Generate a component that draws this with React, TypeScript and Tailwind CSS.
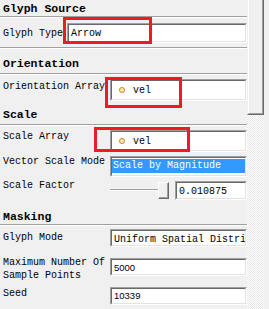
import React from "react";

function Field({
  className,
  innerClass,
  children,
}: {
  className: string;
  innerClass: string;
  children?: React.ReactNode;
}) {
  return (
    <div
      className={
        "min-w-0 border-t border-l border-b border-r border-t-[#a0a0a0] border-l-[#a0a0a0] border-b-white border-r-white " +
        className
      }
    >
      <div
        className={
          "h-full overflow-hidden whitespace-nowrap bg-white border-t border-l border-b border-r border-t-[#696969] border-l-[#696969] border-b-[#e3e3e3] border-r-[#e3e3e3] " +
          innerClass
        }
      >
        {children}
      </div>
    </div>
  );
}

function Sep() {
  return <div className="h-[2px] shrink-0 border-t border-b border-t-[#a0a0a0] border-b-white" />;
}

function ArrayDot() {
  return (
    <span className="mt-[2px] block h-[6px] w-[6px] shrink-0 rounded-full border border-[#d4822a] bg-[#ffe8b6]" />
  );
}

export default function App() {
  return (
    <div className="relative flex h-[309px] w-[269px] overflow-hidden bg-[#f0f0f0] font-['Liberation_Mono',monospace] text-[10px] text-black">
      {/* content */}
      <div className="flex w-[247px] min-w-0 shrink-0 flex-col">
        {/* Glyph Source */}
        <div className="h-[16px] shrink-0 pl-[3px] pt-[2px] text-[11.5px] font-bold leading-[14px]">Glyph Source</div>
        <Sep />
        <div className="mt-[5px] flex h-[20px] shrink-0">
          <div className="w-[67px] shrink-0 pl-[3px] pt-[5px] leading-[12px]">Glyph Type</div>
          <Field className="h-[20px] flex-1" innerClass="pl-[2px] pt-[3px] leading-[12px]">
            Arrow
          </Field>
        </div>
        <div className="mt-[4px]">
          <Sep />
        </div>

        {/* Orientation */}
        <div className="h-[24px] shrink-0 pl-[3px] pt-[8px] text-[11.5px] font-bold leading-[14px]">Orientation</div>
        <Sep />
        <div className="mt-[4px] flex h-[22px] shrink-0">
          <div className="w-[110px] shrink-0 pl-[3px] pt-[2px] leading-[12px]">Orientation Array</div>
          <Field className="h-[22px] flex-1" innerClass="flex items-start pl-[7px] pt-[4px] leading-[12px]">
            <ArrayDot />
            <span className="ml-[8px]">vel</span>
          </Field>
        </div>

        {/* Scale */}
        <div className="h-[23px] shrink-0 pl-[3px] pt-[7px] text-[11.5px] font-bold leading-[14px]">Scale</div>
        <Sep />
        <div className="mt-[4px] flex h-[22px] shrink-0">
          <div className="w-[110px] shrink-0 pl-[3px] pt-[1px] leading-[12px]">Scale Array</div>
          <Field className="h-[22px] flex-1" innerClass="flex items-start pl-[7px] pt-[4px] leading-[12px]">
            <ArrayDot />
            <span className="ml-[8px]">vel</span>
          </Field>
        </div>
        <div className="mt-[4px] flex h-[21px] shrink-0">
          <div className="w-[110px] shrink-0 pl-[3px] leading-[12px]">Vector Scale Mode</div>
          <Field className="h-[21px] flex-1" innerClass="">
            <div className="mt-[1px] h-[14px] bg-[#3399ff] pl-[1px] leading-[14px] text-white">Scale by Magnitude</div>
          </Field>
        </div>
        <div className="mt-[4px] flex h-[19px] shrink-0">
          <div className="w-[110px] shrink-0 pl-[3px] leading-[10px]">Scale Factor</div>
          <div className="w-[48px] shrink-0 pt-[8px]">
            <div className="h-[2px] border-t border-b border-t-[#a0a0a0] border-b-white" />
          </div>
          <div className="mt-[1px] h-[17px] w-[11px] shrink-0 border border-t-white border-l-white border-r-[#696969] border-b-[#696969]">
            <div className="h-full border-r border-b border-r-[#a0a0a0] border-b-[#a0a0a0] bg-[#f0f0f0]" />
          </div>
          <Field className="ml-[6px] h-[19px] flex-1" innerClass="pl-[2px] pt-[3px] leading-[12px]">
            0.010875
          </Field>
        </div>

        {/* Masking */}
        <div className="h-[24px] shrink-0 pl-[3px] pt-[10px] text-[11.5px] font-bold leading-[14px]">Masking</div>
        <Sep />
        <div className="flex h-[29px] shrink-0">
          <div className="w-[110px] shrink-0 pl-[3px] pt-[6px] leading-[12px]">Glyph Mode</div>
          <Field className="mt-[3px] h-[18px] flex-1" innerClass="pl-[2px] pt-[3px] leading-[12px]">
            Uniform Spatial Distribution
          </Field>
        </div>
        <div className="flex h-[29px] shrink-0">
          <div className="w-[110px] shrink-0 pl-[3px] pt-[1px] leading-[13px]">
            Maximum Number Of
            <br />
            Sample Points
          </div>
          <Field
            className="mt-[3px] h-[18px] flex-1"
            innerClass="pl-[2px] pt-[3px] font-['Liberation_Sans',Arial,sans-serif] text-[9.5px] leading-[10px]"
          >
            5000
          </Field>
        </div>
        <div className="flex h-[25px] shrink-0">
          <div className="w-[110px] shrink-0 pl-[3px] pt-[4px] leading-[12px]">Seed</div>
          <Field
            className="mt-[3px] h-[18px] flex-1"
            innerClass="pl-[2px] pt-[2px] font-['Liberation_Sans',Arial,sans-serif] text-[9.5px] leading-[10px]"
          >
            10339
          </Field>
        </div>
      </div>

      {/* scrollbar */}
      <div className="flex w-[17px] shrink-0 flex-col">
        <div className="h-[115px] shrink-0 border-l border-r border-b border-l-[#f0f0f0] border-r-[#696969] border-b-[#696969]">
          <div className="h-full border-l border-r border-b border-l-white border-r-[#a0a0a0] border-b-[#a0a0a0] bg-[#f0f0f0]" />
        </div>
        <div className="flex-1 bg-[repeating-conic-gradient(#ffffff_0_25%,#e6e6e6_0_50%)] bg-[length:2px_2px]" />
      </div>
      <div className="flex-1" />

      {/* red annotation boxes */}
      <div className="pointer-events-none absolute left-[63px] top-[17px] h-[27px] w-[89px] border-[3px] border-[#ed1c24]" />
      <div className="pointer-events-none absolute left-[105px] top-[77px] h-[31px] w-[77px] border-[3px] border-[#ed1c24]" />
      <div className="pointer-events-none absolute left-[94px] top-[127px] h-[25px] w-[96px] border-[3px] border-[#ed1c24]" />
    </div>
  );
}
